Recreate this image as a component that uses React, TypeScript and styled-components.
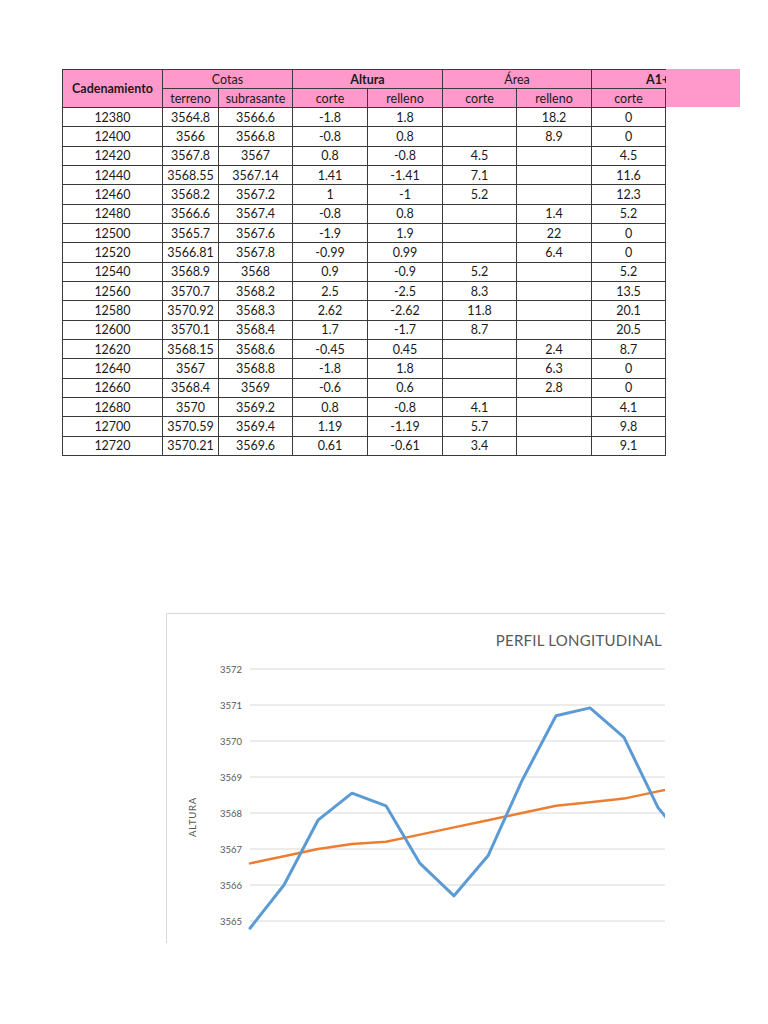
import React from "react";
import styled, { createGlobalStyle } from "styled-components";

const Global = createGlobalStyle`
  html, body { margin: 0; padding: 0; background: #ffffff; }
  body { font-family: Lato, "Open Sans", "Liberation Sans", sans-serif; }
`;

const Page = styled.div`
  width: 768px;
  min-height: 1024px;
  padding: 69px 0 0 62px;
  box-sizing: border-box;
  display: flex;
  flex-direction: column;
  gap: 157px;
`;

const TableRow = styled.div`
  display: flex;
  align-items: flex-start;
`;

const TableClip = styled.div`
  width: 604px;
  overflow: hidden;
`;

const PinkTail = styled.div`
  width: 74px;
  height: 38px;
  background: #ff99cc;
`;

const Sheet = styled.table`
  border-collapse: collapse;
  table-layout: fixed;
  width: 677px;
  font-family: Lato, "Liberation Sans", sans-serif;
  font-size: 12.5px;
  color: #1a1a1a;
`;

const Row = styled.tr<{ $h: number }>`
  height: ${(p) => p.$h}px;
`;

const HeadCell = styled.th<{ $bold?: boolean }>`
  background: #ff99cc;
  border: 1px solid #3a3a3a;
  padding: 0;
  font-weight: ${(p) => (p.$bold ? 700 : 400)};
  text-align: center;
  line-height: 17px;
  white-space: nowrap;
  overflow: hidden;
`;

const Cell = styled.td`
  border: 1px solid #3a3a3a;
  padding: 0;
  text-align: center;
  line-height: 17px;
  white-space: nowrap;
`;

const ChartFrame = styled.div`
  margin-left: 104px;
  width: 498px;
  height: 329px;
  border-top: 1px solid #d9d9d9;
  border-left: 1px solid #d9d9d9;
  overflow: hidden;
`;

const colWidths = [100, 56, 74, 75, 75, 74, 75, 74, 74];

type R = [string, string, string, string, string, string, string, string];
const rows: R[] = [
  ["12380", "3564.8", "3566.6", "-1.8", "1.8", "", "18.2", "0"],
  ["12400", "3566", "3566.8", "-0.8", "0.8", "", "8.9", "0"],
  ["12420", "3567.8", "3567", "0.8", "-0.8", "4.5", "", "4.5"],
  ["12440", "3568.55", "3567.14", "1.41", "-1.41", "7.1", "", "11.6"],
  ["12460", "3568.2", "3567.2", "1", "-1", "5.2", "", "12.3"],
  ["12480", "3566.6", "3567.4", "-0.8", "0.8", "", "1.4", "5.2"],
  ["12500", "3565.7", "3567.6", "-1.9", "1.9", "", "22", "0"],
  ["12520", "3566.81", "3567.8", "-0.99", "0.99", "", "6.4", "0"],
  ["12540", "3568.9", "3568", "0.9", "-0.9", "5.2", "", "5.2"],
  ["12560", "3570.7", "3568.2", "2.5", "-2.5", "8.3", "", "13.5"],
  ["12580", "3570.92", "3568.3", "2.62", "-2.62", "11.8", "", "20.1"],
  ["12600", "3570.1", "3568.4", "1.7", "-1.7", "8.7", "", "20.5"],
  ["12620", "3568.15", "3568.6", "-0.45", "0.45", "", "2.4", "8.7"],
  ["12640", "3567", "3568.8", "-1.8", "1.8", "", "6.3", "0"],
  ["12660", "3568.4", "3569", "-0.6", "0.6", "", "2.8", "0"],
  ["12680", "3570", "3569.2", "0.8", "-0.8", "4.1", "", "4.1"],
  ["12700", "3570.59", "3569.4", "1.19", "-1.19", "5.7", "", "9.8"],
  ["12720", "3570.21", "3569.6", "0.61", "-0.61", "3.4", "", "9.1"],
];

const yOf = (v: number) => 307 - (v - 3565) * 36;
const xOf = (i: number) => 83 + 34 * i;

function Chart() {
  const terreno = rows.map((r) => parseFloat(r[1]));
  const sub = rows.map((r) => parseFloat(r[2]));
  const pts = (vals: number[]) => vals.map((v, i) => `${xOf(i)},${yOf(v).toFixed(1)}`).join(" ");
  const ticks = [3565, 3566, 3567, 3568, 3569, 3570, 3571, 3572];
  return (
    <svg width="498" height="329" viewBox="0 0 498 329">
      <text
        x="495"
        y="32"
        textAnchor="end"
        fontFamily="Lato, 'Liberation Sans', sans-serif"
        fontSize="15"
        letterSpacing="0.25"
        fill="#595959"
      >
        PERFIL LONGITUDINAL
      </text>
      {ticks.map((t) => (
        <g key={t}>
          <line x1="83" x2="498" y1={yOf(t)} y2={yOf(t)} stroke="#d9d9d9" strokeWidth="1" />
          <text
            x="75"
            y={yOf(t) + 3.5}
            textAnchor="end"
            fontFamily="Lato, 'Liberation Sans', sans-serif"
            fontSize="9.5"
            fill="#595959"
          >
            {t}
          </text>
        </g>
      ))}
      <text
        transform="translate(29 203) rotate(-90)"
        textAnchor="middle"
        fontFamily="Lato, 'Liberation Sans', sans-serif"
        fontSize="9.5"
        letterSpacing="0.8"
        fill="#595959"
      >
        ALTURA
      </text>
      <polyline points={pts(sub)} fill="none" stroke="#ed7d31" strokeWidth="2.5" strokeLinejoin="round" strokeLinecap="round" />
      <polyline points={pts(terreno)} fill="none" stroke="#5b9bd5" strokeWidth="3" strokeLinejoin="round" strokeLinecap="round" />
    </svg>
  );
}

export default function App() {
  return (
    <>
      <Global />
      <Page>
        <TableRow>
          <TableClip>
            <Sheet>
              <colgroup>
                {colWidths.map((w, i) => (
                  <col key={i} style={{ width: w }} />
                ))}
              </colgroup>
              <thead>
                <Row $h={19}>
                  <HeadCell rowSpan={2} $bold>
                    Cadenamiento
                  </HeadCell>
                  <HeadCell colSpan={2}>Cotas</HeadCell>
                  <HeadCell colSpan={2} $bold>
                    Altura
                  </HeadCell>
                  <HeadCell colSpan={2}>Área</HeadCell>
                  <HeadCell colSpan={2} $bold>
                    A1+A2
                  </HeadCell>
                </Row>
                <Row $h={19}>
                  <HeadCell>terreno</HeadCell>
                  <HeadCell>subrasante</HeadCell>
                  <HeadCell>corte</HeadCell>
                  <HeadCell>relleno</HeadCell>
                  <HeadCell>corte</HeadCell>
                  <HeadCell>relleno</HeadCell>
                  <HeadCell>corte</HeadCell>
                  <HeadCell />
                </Row>
              </thead>
              <tbody>
                {rows.map((r) => (
                  <Row $h={19.33} key={r[0]}>
                    {r.map((c, i) => (
                      <Cell key={i}>{c}</Cell>
                    ))}
                    <Cell />
                  </Row>
                ))}
              </tbody>
            </Sheet>
          </TableClip>
          <PinkTail />
        </TableRow>
        <ChartFrame>
          <Chart />
        </ChartFrame>
      </Page>
    </>
  );
}
